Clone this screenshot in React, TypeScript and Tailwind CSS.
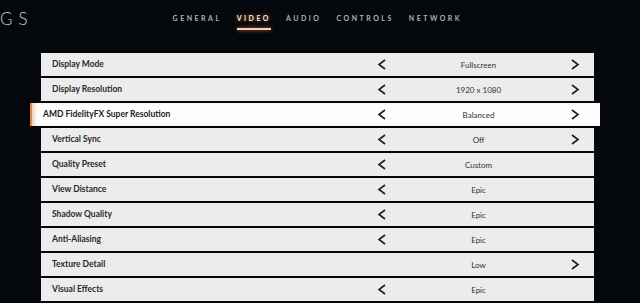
import type { ReactNode } from 'react';

type Row = {
  label: string;
  value: string;
  left?: boolean;
  right?: boolean;
  active?: boolean;
};

const ROWS: Row[] = [
  { label: 'Display Mode', value: 'Fullscreen', left: true, right: true },
  { label: 'Display Resolution', value: '1920 x 1080', left: true, right: true },
  { label: 'AMD FidelityFX Super Resolution', value: 'Balanced', left: true, right: true, active: true },
  { label: 'Vertical Sync', value: 'Off', left: true, right: true },
  { label: 'Quality Preset', value: 'Custom', left: true },
  { label: 'View Distance', value: 'Epic', left: true },
  { label: 'Shadow Quality', value: 'Epic', left: true },
  { label: 'Anti-Aliasing', value: 'Epic', left: true },
  { label: 'Texture Detail', value: 'Low', right: true },
  { label: 'Visual Effects', value: 'Epic', left: true },
];

const TABS = ['GENERAL', 'VIDEO', 'AUDIO', 'CONTROLS', 'NETWORK'];

function Chevron({ dir }: { dir: 'left' | 'right' }) {
  return (
    <svg width="10" height="11" viewBox="0 0 10 11" aria-hidden className="text-[#1d1d1d]">
      {dir === 'left' ? (
        <polyline points="8,1 2,5.5 8,10" fill="none" stroke="currentColor" strokeWidth="1.6" />
      ) : (
        <polyline points="2,1 8,5.5 2,10" fill="none" stroke="currentColor" strokeWidth="1.6" />
      )}
    </svg>
  );
}

function Slot({ children }: { children?: ReactNode }) {
  return <div className="flex w-[20px] items-center justify-center">{children}</div>;
}

function SettingRow({ row }: { row: Row }) {
  return (
    <div
      className={
        row.active
          ? '-ml-[11px] -mr-[6px] flex h-[23px] items-center border-l-2 border-[#e08a4a] bg-[#fefefe] shadow-[inset_4px_0_4px_-2px_rgba(230,140,70,0.5)]'
          : 'flex h-[23px] items-center bg-[#ececec]'
      }
    >
      <div
        className={
          row.active
            ? 'flex-1 pl-[11px] text-[8.5px] font-bold text-[#1a1a1a]'
            : 'flex-1 pl-[11px] text-[8.5px] font-bold text-[#2a2a2a]'
        }
      >
        {row.label}
      </div>
      <div className={row.active ? 'flex w-[228px] items-center pr-[15px]' : 'flex w-[222px] items-center pr-[9px]'}>
        <Slot>{row.left ? <Chevron dir="left" /> : null}</Slot>
        <div className="flex-1 text-center text-[8px] text-[#333333]">{row.value}</div>
        <Slot>{row.right ? <Chevron dir="right" /> : null}</Slot>
      </div>
    </div>
  );
}

export default function App() {
  return (
    <div
      className="h-[303px] w-[640px] overflow-hidden bg-[#04070b]"
      style={{ fontFamily: 'Lato, "Noto Sans", sans-serif' }}
    >
      <div className="flex h-[53px] items-start">
        <div className="pt-[6px] text-[17px] font-light tracking-[6px] text-[#c9ced4]">GS</div>
        <nav className="ml-[139px] flex gap-[15px] pt-[13px]">
          {TABS.map((t) => (
            <div key={t} className="flex flex-col items-center">
              <span
                className={
                  t === 'VIDEO'
                    ? 'text-[7px] font-bold tracking-[2.5px] text-[#fbe8de] [text-shadow:0_0_4px_rgba(230,120,60,0.8)]'
                    : 'text-[7px] font-bold tracking-[2.5px] text-[#aeb4bb]'
                }
              >
                {t}
              </span>
              {t === 'VIDEO' ? (
                <div className="mt-[4px] h-[2px] w-full bg-[#f2d3c2] shadow-[0_0_4px_rgba(230,120,60,0.9)]" />
              ) : null}
            </div>
          ))}
        </nav>
      </div>
      <div className="ml-[41px] mr-[46px] flex flex-col gap-[2px]">
        {ROWS.map((r) => (
          <SettingRow key={r.label} row={r} />
        ))}
      </div>
    </div>
  );
}
